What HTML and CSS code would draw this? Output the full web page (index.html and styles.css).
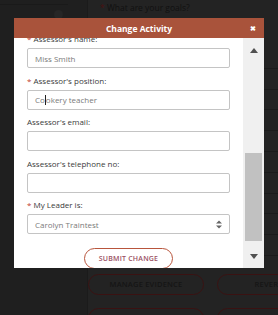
FILE: index.html
```html
<!DOCTYPE html>
<html lang="en">
  <head>
    <meta charset="UTF-8" />
    <meta name="viewport" content="width=device-width, initial-scale=1.0" />
    <title>Change Activity</title>
    <link rel="stylesheet" href="styles.css">
  </head>
  <body>
    <!-- page behind the overlay -->
    <div class="page">
      <aside class="sidebar">
        <span class="side-line"></span>
        <span class="side-dot"></span>
      </aside>
      <main class="main">
        <p class="goal-title"><span class="req">*</span> What are your goals?</p>
        <ul class="goal-rows">
          <li></li><li></li><li></li><li></li><li></li>
          <li></li><li></li><li></li><li></li><li></li>
        </ul>
        <div class="actions">
          <a class="pill" href="#">MANAGE EVIDENCE</a>
          <a class="pill" href="#">REVERT TO</a>
          <a class="pill" href="#"></a>
          <a class="pill" href="#"></a>
        </div>
      </main>
    </div>

    <!-- modal -->
    <div class="modal">
      <div class="modal-head">
        <h2>Change Activity</h2>
        <span class="close">&#10006;</span>
      </div>
      <div class="modal-body">
        <form class="modal-form">
          <div class="field">
            <label><span class="req">*</span> Assessor's name:</label>
            <div class="box">Miss Smith</div>
          </div>
          <div class="field">
            <label><span class="req">*</span> Assessor's position:</label>
            <div class="box">Co<span class="caret"></span>okery teacher</div>
          </div>
          <div class="field">
            <label>Assessor's email:</label>
            <div class="box"></div>
          </div>
          <div class="field">
            <label>Assessor's telephone no:</label>
            <div class="box"></div>
          </div>
          <div class="field">
            <label><span class="req">*</span> My Leader is:</label>
            <div class="box select">
              <span>Carolyn Traintest</span>
              <svg width="6" height="9" viewBox="0 0 6 9">
                <path d="M0 3.6 L3 0.6 L6 3.6 Z M0 5.4 L3 8.4 L6 5.4 Z" fill="#666" />
              </svg>
            </div>
          </div>
          <button type="button" class="submit">SUBMIT CHANGE</button>
        </form>
        <div class="scrollbar">
          <div class="sb-btn"><span class="arrow-up"></span></div>
          <div class="sb-track"><div class="sb-thumb"></div></div>
          <div class="sb-btn"><span class="arrow-down"></span></div>
        </div>
      </div>
    </div>
  </body>
</html>
```

FILE: styles.css
```css
* {
  margin: 0;
  padding: 0;
  box-sizing: border-box;
}
html,
body {
  width: 278px;
  height: 315px;
  overflow: hidden;
  font-family: "Open Sans", "Liberation Sans", sans-serif;
  background-color: #232323;
}
ul,
li {
  list-style: none;
}
a {
  text-decoration: none;
}
.req {
  color: #c0392b;
}

/* page behind overlay */
.page {
  display: flex;
  height: 315px;
}
.sidebar {
  width: 88px;
  flex-shrink: 0;
  background-color: #1f1f1f;
  border-right: 1px solid #1b1b1b;
  padding-top: 4px;
  display: flex;
  flex-direction: column;
}
.side-line {
  width: 68px;
  border-top: 1px solid #1a1a1a;
}
.side-dot {
  width: 9px;
  height: 9px;
  margin: 5px 0 0 54px;
  border-radius: 50%;
  background-color: #262626;
}
.main {
  flex: 1;
  min-width: 0;
  overflow: hidden;
}
.goal-title {
  padding: 2px 0 0 12px;
  font-size: 8.5px;
  line-height: 12px;
  color: #111;
  white-space: nowrap;
}
.goal-title .req {
  color: #4a1010;
}
.goal-rows {
  margin-top: 34px;
}
.goal-rows li {
  height: 20.8px;
  border-bottom: 1px solid #1b1b1b;
}
.actions {
  margin-top: 18px;
  display: grid;
  grid-template-columns: 116px 116px;
  gap: 13px 13px;
  width: 300px;
}
.pill {
  display: flex;
  align-items: center;
  justify-content: center;
  height: 21px;
  border: 1px solid #3a1212;
  border-radius: 11px;
  font-size: 7.5px;
  font-weight: 600;
  color: #151515;
  letter-spacing: 0.2px;
  white-space: nowrap;
}

/* modal */
.modal {
  position: fixed;
  left: 14px;
  top: 18px;
  width: 250px;
  height: 250px;
  background-color: #fff;
  display: flex;
  flex-direction: column;
}
.modal-head {
  height: 20px;
  flex-shrink: 0;
  background-color: #a9533b;
  display: grid;
  grid-template-columns: 1fr auto 1fr;
  align-items: center;
}
.modal-head h2 {
  grid-column: 2;
  font-size: 8.5px;
  font-weight: 700;
  color: #fff;
}
.modal-head .close {
  justify-self: end;
  padding-right: 8px;
  font-size: 6.5px;
  font-weight: 700;
  color: #fff;
}
.modal-body {
  flex: 1;
  display: flex;
  overflow: hidden;
}
.modal-form {
  flex: 1;
  padding: 0 13px;
  margin-top: -5px;
  display: flex;
  flex-direction: column;
}
.field {
  margin-bottom: 6.5px;
}
.field label {
  display: block;
  font-size: 8px;
  line-height: 12px;
  color: #3a3a3a;
  margin-bottom: 3px;
}
.box {
  height: 20px;
  border: 1px solid #c4c4c4;
  border-radius: 2px;
  padding: 0 7px;
  display: flex;
  align-items: center;
  font-size: 8px;
  color: #7a7a7a;
  white-space: nowrap;
}
.caret {
  display: inline-block;
  width: 1px;
  height: 10px;
  background-color: #222;
}
.select {
  justify-content: space-between;
}
.submit {
  align-self: center;
  margin-top: 7.5px;
  width: 89px;
  height: 21px;
  flex-shrink: 0;
  border: 1px solid #b8553c;
  border-radius: 11px;
  background-color: #fff;
  font-family: "Open Sans", "Liberation Sans", sans-serif;
  font-size: 7px;
  font-weight: 600;
  color: #9a4f63;
  letter-spacing: 0.2px;
}

/* scrollbar */
.scrollbar {
  width: 21px;
  flex-shrink: 0;
  background-color: #f0f0f0;
  display: flex;
  flex-direction: column;
}
.sb-btn {
  height: 24px;
  display: flex;
  align-items: center;
  justify-content: center;
}
.arrow-up {
  border-left: 4.5px solid transparent;
  border-right: 4.5px solid transparent;
  border-bottom: 5px solid #505050;
}
.arrow-down {
  border-left: 4.5px solid transparent;
  border-right: 4.5px solid transparent;
  border-top: 5px solid #505050;
}
.sb-track {
  flex: 1;
}
.sb-thumb {
  margin: 90.7px 2px 0;
  height: 88px;
  background-color: #c1c1c1;
}
```
